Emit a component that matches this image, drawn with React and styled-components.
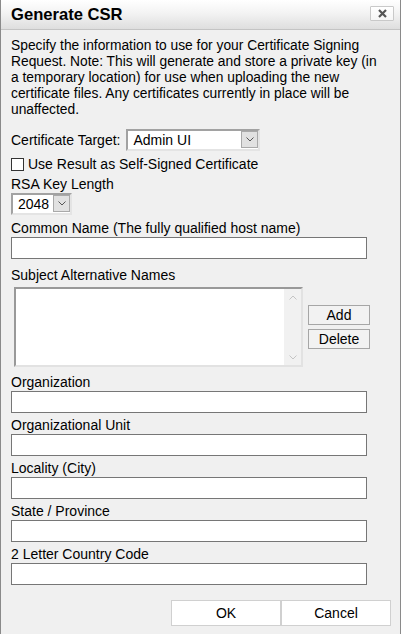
import React from 'react';
import styled, { createGlobalStyle } from 'styled-components';

const GlobalStyle = createGlobalStyle`
	html, body {
		margin: 0;
		padding: 0;
		background: #ffffff;
	}
	body {
		font-family: 'Liberation Sans', Arial, sans-serif;
		font-size: 14px;
		color: #000;
	}
	* {
		box-sizing: border-box;
	}
`;

const fields = [
	'Organization',
	'Organizational Unit',
	'Locality (City)',
	'State / Province',
	'2 Letter Country Code',
];

function Chevron({ up, color = '#555' }) {
	return (
		<svg width='8' height='5' viewBox='0 0 8 5'>
			<path
				d={up ? 'M0.5 4.5 L4 1 L7.5 4.5' : 'M0.5 0.5 L4 4 L7.5 0.5'}
				fill='none'
				stroke={color}
				strokeWidth='1'
			/>
		</svg>
	);
}

function Select({ value, width }) {
	return (
		<SelectBox $width={width}>
			<span>{value}</span>
			<ArrowBox>
				<Chevron />
			</ArrowBox>
		</SelectBox>
	);
}

function App() {
	const [selfSigned, setSelfSigned] = React.useState(false);

	return (
		<>
			<GlobalStyle />
			<Dialog>
				<TitleBar>
					<Title>Generate CSR</Title>
					<CloseButton aria-label='Close'>
						<svg width='9' height='9' viewBox='0 0 9 9'>
							<path d='M1 1 L8 8 M8 1 L1 8' stroke='#555' strokeWidth='2.2' />
						</svg>
					</CloseButton>
				</TitleBar>
				<Body>
					<Intro>
						Specify the information to use for your Certificate Signing Request.
						Note: This will generate and store a private key (in a temporary
						location) for use when uploading the new certificate files. Any
						certificates currently in place will be unaffected.
					</Intro>

					<TargetRow>
						<span>Certificate Target:</span>
						<Select value='Admin UI' width={134} />
					</TargetRow>

					<CheckRow>
						<CheckBox
							type='checkbox'
							checked={selfSigned}
							onChange={e => setSelfSigned(e.target.checked)}
						/>
						<span>Use Result as Self-Signed Certificate</span>
					</CheckRow>

					<Label $top={4}>RSA Key Length</Label>
					<Select value='2048' width={61} />

					<Label $top={5}>Common Name (The fully qualified host name)</Label>
					<TextInput />

					<Label $top={8} $bottom={4}>
						Subject Alternative Names
					</Label>
					<SanRow>
						<ListBox>
							<ListArea />
							<ScrollTrack>
								<Chevron up color='#c4c4c4' />
								<Chevron color='#c4c4c4' />
							</ScrollTrack>
						</ListBox>
						<SideButtons>
							<SmallButton>Add</SmallButton>
							<SmallButton>Delete</SmallButton>
						</SideButtons>
					</SanRow>

					{fields.map((f, i) => (
						<React.Fragment key={f}>
							<Label $top={i === 0 ? 7 : 4}>{f}</Label>
							<TextInput />
						</React.Fragment>
					))}

					<Footer>
						<DialogButton>OK</DialogButton>
						<DialogButton>Cancel</DialogButton>
					</Footer>
				</Body>
			</Dialog>
		</>
	);
}

const Dialog = styled.div`
	width: 401px;
	height: 634px;
	background: #f0f0f0;
	border-left: 1px solid #8a8a8a;
	border-right: 1px solid #8a8a8a;
	display: flex;
	flex-direction: column;
`;

const TitleBar = styled.div`
	height: 30px;
	flex-shrink: 0;
	display: flex;
	align-items: center;
	justify-content: space-between;
	padding: 0 6px 0 10px;
	background: linear-gradient(to bottom, #ffffff 0%, #f3f3f3 45%, #dedede 100%);
	border-bottom: 1px solid #c4c4c4;
`;

const Title = styled.h2`
	margin: 0;
	font-size: 16.6px;
	line-height: 16px;
	font-weight: bold;
	padding-top: 1px;
`;

const CloseButton = styled.button`
	width: 24px;
	height: 15px;
	margin-top: -2px;
	padding: 0;
	display: flex;
	align-items: center;
	justify-content: center;
	background: linear-gradient(to bottom, #ffffff, #f6f6f6);
	border: 1px solid #c9c9c9;
	border-radius: 1px;
`;

const Body = styled.div`
	padding: 8px 9px 0 10px;
	display: flex;
	flex-direction: column;
	align-items: flex-start;
`;

const Intro = styled.p`
	margin: 0;
	max-width: 376px;
	font-size: 13.8px;
	line-height: 16px;
`;

const TargetRow = styled.div`
	margin-top: 11px;
	display: flex;
	align-items: center;
	gap: 6px;
	line-height: 16px;
`;

const SelectBox = styled.div`
	width: ${p => p.$width}px;
	height: 22px;
	display: flex;
	align-items: center;
	justify-content: space-between;
	background: #fff;
	border: 2px solid;
	border-color: #a2a2a2 #e4e4e4 #e4e4e4 #a2a2a2;
	padding: 0 0 1px 5px;
	line-height: 16px;
`;

const ArrowBox = styled.div`
	width: 17px;
	height: 17px;
	display: flex;
	align-items: center;
	justify-content: center;
	background: #e1e1e1;
	border: 1px solid #a9a9a9;
`;

const CheckRow = styled.label`
	margin-top: 5px;
	display: flex;
	align-items: center;
	gap: 4px;
	line-height: 16px;
`;

const CheckBox = styled.input`
	appearance: none;
	margin: 0;
	width: 13px;
	height: 13px;
	background: #fff;
	border: 1px solid #333;
	border-radius: 0;
`;

const Label = styled.div`
	margin-top: ${p => p.$top}px;
	margin-bottom: ${p => (p.$bottom !== undefined ? p.$bottom : 1)}px;
	line-height: 16px;
`;

const TextInput = styled.input`
	width: 356px;
	height: 22px;
	margin: 0;
	background: #fff;
	border: 1px solid #767676;
	border-radius: 0;
	font: inherit;
	padding: 0 3px;
`;

const SanRow = styled.div`
	display: flex;
	align-items: center;
	gap: 5px;
	padding-left: 3px;
`;

const ListBox = styled.div`
	width: 289px;
	height: 80px;
	display: flex;
	background: #fff;
	border: 2px solid;
	border-color: #999999 #e2e2e2 #e2e2e2 #999999;
`;

const ListArea = styled.div`
	flex: 1;
`;

const ScrollTrack = styled.div`
	width: 17px;
	display: flex;
	flex-direction: column;
	align-items: center;
	justify-content: space-between;
	padding: 6px 0 5px;
	background: #f1f1f1;
`;

const SideButtons = styled.div`
	display: flex;
	flex-direction: column;
	gap: 4px;
`;

const SmallButton = styled.button`
	width: 62px;
	height: 20px;
	padding: 0;
	font: inherit;
	line-height: 16px;
	color: #000;
	background: #f2f2f2;
	border: 1px solid #a6a6a6;
	border-radius: 0;
`;

const Footer = styled.div`
	align-self: flex-end;
	margin-top: 15px;
	display: flex;
`;

const DialogButton = styled.button`
	width: 110px;
	height: 26px;
	padding: 0;
	font: inherit;
	color: #000;
	background: #fff;
	border: 1px solid #d0d0d0;
	border-radius: 0;
`;

export default App;
